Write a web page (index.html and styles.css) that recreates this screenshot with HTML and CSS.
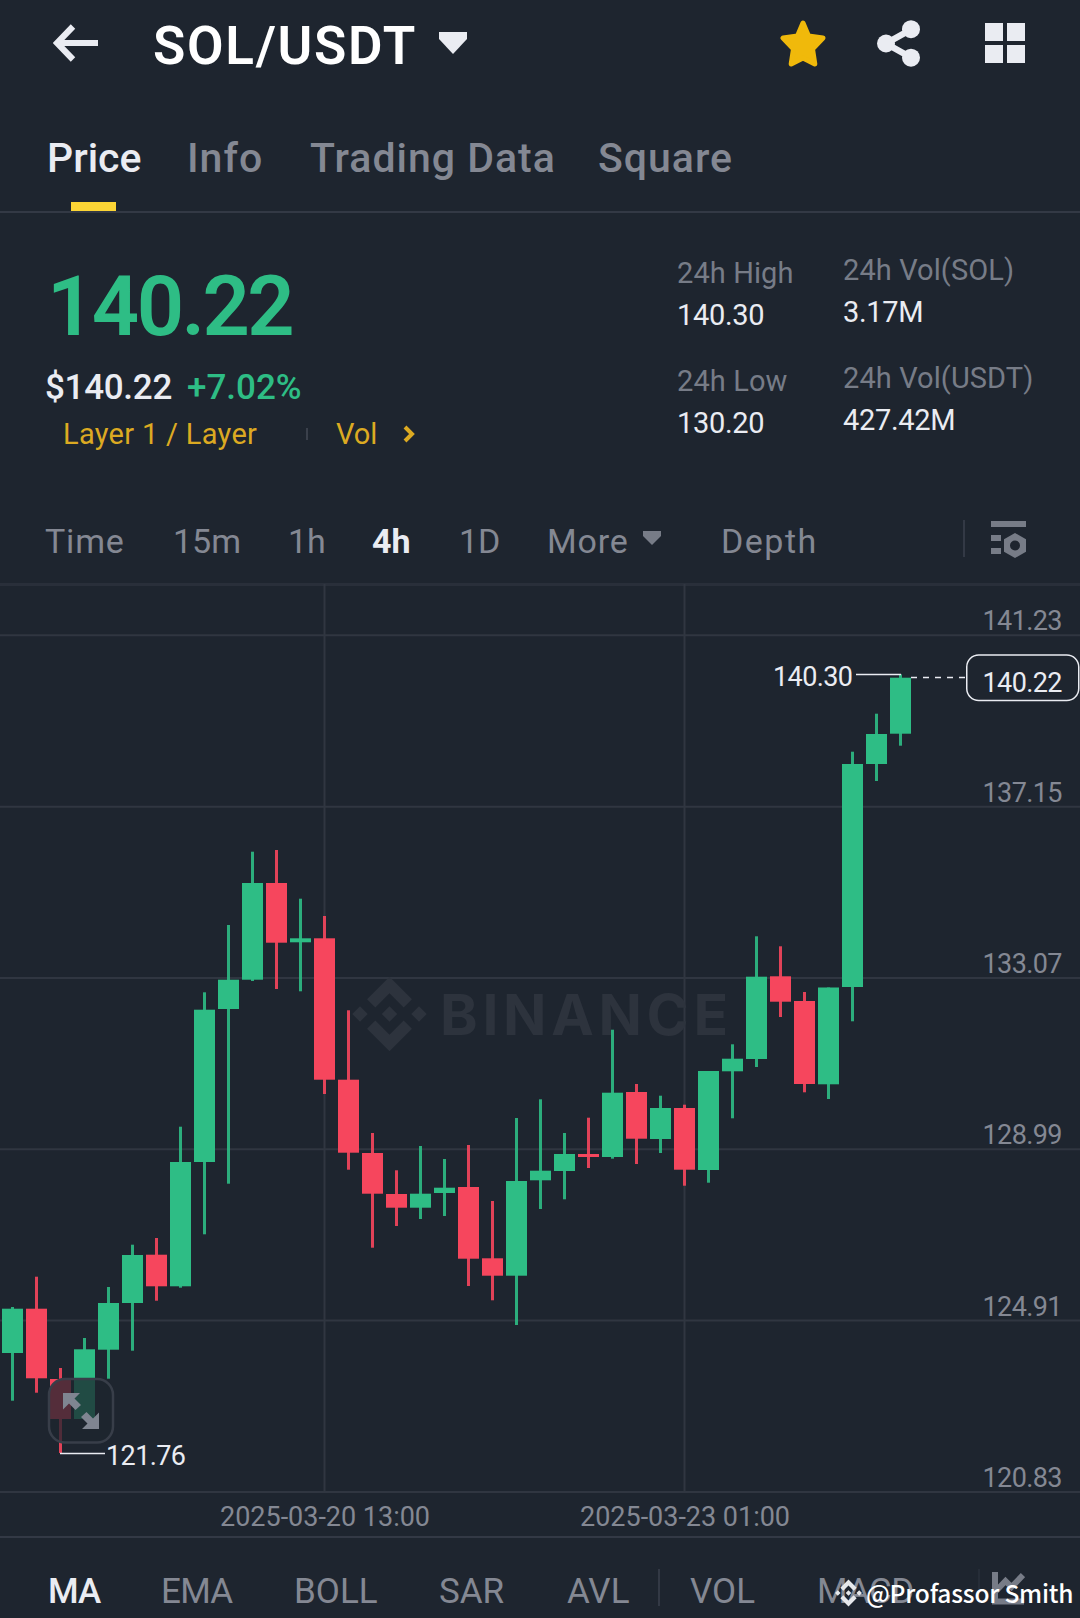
FILE: index.html
```
<!DOCTYPE html>
<html lang="en">
<head>
    <meta charset="UTF-8">
    <meta name="viewport" content="width=device-width, initial-scale=1.0">
    <title>SOL/USDT</title>
    <link rel="stylesheet" href="styles.css">
</head>
<body>
    <header class="topbar">
        <svg class="back" width="46" height="38" viewBox="0 0 46 38">
            <path d="M45 19H4M20 2.5L4 19l16 16.5" fill="none" stroke="#eaecf2" stroke-width="6.2"/>
        </svg>
        <h1>SOL/USDT</h1>
        <svg class="pair-caret" width="28" height="22" viewBox="0 0 28 22">
            <path d="M0 0h28v7L14 22 0 7z" fill="#eaecf2"/>
        </svg>
        <svg class="star" width="46" height="47" viewBox="0 0 46 47">
            <path d="M23 3l5.500 13L43 18l-10.500 11 2.300 15L23 38l-11.800 6 2.300-15L3 18l14.500-2z" fill="#f0b90b" stroke="#f0b90b" stroke-width="5" stroke-linejoin="round"/>
        </svg>
        <svg class="share" width="43" height="47" viewBox="0 0 43 47">
            <path d="M34 9.500L9 23.500l25 14" fill="none" stroke="#eaecf2" stroke-width="6.500"/>
            <circle cx="34" cy="9.200" r="9" fill="#eaecf2"/>
            <circle cx="9" cy="23.500" r="9" fill="#eaecf2"/>
            <circle cx="34" cy="37.700" r="9" fill="#eaecf2"/>
        </svg>
        <svg class="tiles" width="40" height="40" viewBox="0 0 40 40">
            <path d="M0 0h18v18H0zM22 0h18v18H22zM0 22h18v18H0zM22 22h18v18H22z" fill="#eaecf2"/>
        </svg>
    </header>

    <nav class="tabs">
        <a class="tab active">Price</a>
        <a class="tab">Info</a>
        <a class="tab">Trading Data</a>
        <a class="tab">Square</a>
    </nav>

    <section class="ticker">
        <div class="price-box">
            <div class="last-price">140.22</div>
            <div class="fiat"><span class="usd">$140.22</span><span class="change">+7.02%</span></div>
            <div class="tags">
                <span class="layer">Layer 1 / Layer</span>
                <span class="tag-line"></span>
                <span class="vol">Vol</span>
                <svg width="12" height="18" viewBox="0 0 12 18">
                    <path d="M2 2l7 7-7 7" fill="none" stroke="#dcaa22" stroke-width="4"/>
                </svg>
            </div>
        </div>
        <div class="stats high-low">
            <div class="label">24h High</div>
            <div class="value">140.30</div>
            <div class="label">24h Low</div>
            <div class="value">130.20</div>
        </div>
        <div class="stats volumes">
            <div class="label">24h Vol(SOL)</div>
            <div class="value">3.17M</div>
            <div class="label">24h Vol(USDT)</div>
            <div class="value">427.42M</div>
        </div>
    </section>

    <nav class="intervals">
        <span class="time">Time</span>
        <span class="m15">15m</span>
        <span class="h1">1h</span>
        <span class="h4 active">4h</span>
        <span class="d1">1D</span>
        <span class="more">More</span>
        <svg class="more-caret" width="18" height="14" viewBox="0 0 18 14">
            <path d="M0 0h18v5L9 14 0 5z" fill="#777c87"/>
        </svg>
        <span class="depth">Depth</span>
        <i class="divider"></i>
        <svg class="settings" width="35" height="37" viewBox="0 0 35 37">
            <path d="M0 0h35v6H0zM0 14h10v6H0zM0 27h10v6H0z" fill="#777c87"/>
            <path d="M24 12l11 6.300v12.500L24 37l-11-6.200V18.300zM24 19.500a5 5 0 1 0 0 10 5 5 0 0 0 0-10z" fill="#777c87" fill-rule="evenodd"/>
        </svg>
    </nav>

    <svg id="chart" width="1080" height="953" viewBox="0 583 1080 953">
        <g id="grid"></g>
        <g class="brand">
            <g id="brand-logo" transform="translate(389.500 1014) scale(.59)">
                <path d="M0-63l38 38-14 14L0-35l-24 24-14-14zM0 63l38-38-14-14L0 35l-24-24-14 14zM0-13L13 0 0 13-13 0zM-50-13L-37 0l-13 13L-63 0zM50-13L63 0 50 13 37 0z"/>
            </g>
            <text x="440" y="1034.500" textLength="288">BINANCE</text>
        </g>
        <g id="candles"></g>
        <g id="marks">
            <path class="mark-line" d="M856 674.500h45M60 1453.500h45"/>
            <path class="mark-line" d="M911 677.500h55" stroke-dasharray="6 6"/>
            <text class="mark" x="773" y="685.500" textLength="80">140.30</text>
            <text class="mark" x="106" y="1464.500" textLength="80">121.76</text>
            <rect class="price-tag" x="966.750" y="655" width="112" height="45.500" rx="12"/>
            <text class="mark" x="982.500" y="691.500" textLength="80">140.22</text>
        </g>
        <g id="expand">
            <rect x="49" y="1379" width="64" height="63.500" rx="16"/>
            <path d="M63 1393h17l-5.500 5.500 6.500 6.500-5.500 5-6.500-6.500-6 6zM99 1429H82l5.500-5.500-6.500-6.500 5.500-5 6.500 6.500 6-6z"/>
        </g>
    </svg>

    <footer class="indicators">
        <span class="ma active">MA</span>
        <span class="ema">EMA</span>
        <span class="boll">BOLL</span>
        <span class="sar">SAR</span>
        <span class="avl">AVL</span>
        <i class="divider"></i>
        <span class="volume">VOL</span>
        <span class="macd">MACD</span>
        <i class="divider faint"></i>
        <svg class="chart-icon" width="33" height="33" viewBox="0 0 33 33">
            <path d="M3 0v29.500h29M3 20L13.500 9l6 6L31 3" fill="none" stroke="#777c87" stroke-width="6"/>
        </svg>
        <div class="author">
            <svg width="27" height="28" viewBox="-63 -65 126 130">
                <path d="M0-63l38 38-14 14L0-35l-24 24-14-14zM0 63l38-38-14-14L0 35l-24-24-14 14zM0-13L13 0 0 13-13 0zM-50-13L-37 0l-13 13L-63 0zM50-13L63 0 50 13 37 0z" fill="#e6e8eb"/>
            </svg>
            <span>@Profassor Smith</span>
        </div>
    </footer>

    <script>
        // color, high, body top, body bottom, low
        const candles = [
            ['g', 1307, 1308.7, 1353, 1400.7],
            ['r', 1276.7, 1308.7, 1378.3, 1392.7],
            ['r', 1368, 1379, 1419, 1453],
            ['g', 1338, 1349.3, 1419, 1419],
            ['g', 1287, 1303, 1349.7, 1378.7],
            ['g', 1244.7, 1255, 1303, 1350.7],
            ['r', 1238, 1254.7, 1286.3, 1300.7],
            ['g', 1126.7, 1162, 1286.3, 1287.7],
            ['g', 992.3, 1009.7, 1162, 1234.3],
            ['g', 925, 979.7, 1009, 1183.7],
            ['g', 851.7, 883, 979.7, 981],
            ['r', 850, 883, 942.7, 989],
            ['g', 898.7, 938.3, 942.3, 991.3],
            ['r', 916, 938.3, 1079.7, 1094],
            ['r', 1010.3, 1079.7, 1152.7, 1169.7],
            ['r', 1133, 1153, 1193.7, 1247.7],
            ['r', 1170.3, 1194, 1207.7, 1226],
            ['g', 1146, 1193.7, 1207.7, 1219],
            ['g', 1159, 1187.7, 1193, 1216],
            ['r', 1145, 1187, 1258.7, 1286],
            ['r', 1201, 1258.3, 1275.7, 1300.3],
            ['g', 1118, 1181, 1275.7, 1325],
            ['g', 1099.3, 1170.7, 1180.3, 1209],
            ['g', 1133, 1154, 1171, 1199.3],
            ['r', 1117.7, 1154, 1157, 1168],
            ['g', 1029.7, 1092.7, 1157, 1158.7],
            ['r', 1084, 1092, 1138.7, 1164],
            ['g', 1095.7, 1108, 1139, 1153],
            ['r', 1104.7, 1108, 1169.7, 1185.7],
            ['g', 1071, 1071, 1170, 1182.7],
            ['g', 1044.3, 1058.7, 1071.3, 1118.3],
            ['g', 936.3, 976.7, 1059, 1067],
            ['r', 946.3, 976.3, 1001.7, 1017],
            ['r', 992, 1001, 1084, 1092.3],
            ['g', 987.5, 987.5, 1084.3, 1099],
            ['g', 751.7, 764, 987, 1021.3],
            ['g', 713.7, 734, 764, 781],
            ['g', 674.3, 677.7, 733.7, 745.7]
        ];

        // grid and axis labels
        let grid = '<path class="top-line" d="M0 584.500H1080"/>';
        ['141.23', '137.15', '133.07', '128.99', '124.91', '120.83'].forEach((price, i) => {
            const y = 635.3 + i * 171.33;
            grid += `<path d="M0 ${y}H1080"/><text x="982.5" y="${y - 5}" textLength="80">${price}</text>`;
        });
        grid += '<path d="M324.500 584V1492M684.500 584V1492"/>';
        grid += '<text x="220" y="1525.500" textLength="210">2025-03-20 13:00</text>';
        grid += '<text x="580" y="1525.500" textLength="210">2025-03-23 01:00</text>';
        document.getElementById('grid').innerHTML = grid;

        // candles, 24px apart
        document.getElementById('candles').innerHTML = candles.map(([color, high, top, bottom, low], i) => {
            const x = 2 + i * 24;
            return `<g class="${color}"><rect class="wick" x="${x + 9}" y="${high}" width="3" height="${low - high}"/>` +
                `<rect x="${x}" y="${top}" width="21" height="${bottom - top}"/></g>`;
        }).join('');
    </script>
</body>
</html>
```
FILE: styles.css
```
/* General */
* {
    box-sizing: border-box;
}

body {
    margin: 0;
    width: 1080px;
    height: 1618px;
    overflow: hidden;
    background-color: #1e252f;
    color: #eaecf2;
    font-family: Roboto, "Liberation Sans", sans-serif;
}

svg {
    display: block;
    flex: none;
}

span, a {
    flex: none;
    white-space: nowrap;
}

/* Top bar */
.topbar {
    display: flex;
    align-items: center;
    height: 86px;
    padding-left: 53px;
}

h1 {
    width: 262px;
    margin: 6px 24px 0 54px;
    font-size: 53px;
    font-weight: 600;
    line-height: 60px;
    color: #fff;
    letter-spacing: 1.7px;
}

.star {
    margin-left: 313px;
}

.share {
    margin-left: 51px;
}

.tiles {
    margin-left: 65px;
}

/* Tabs */
.tabs {
    display: grid;
    grid-template-columns: 140px 123px 288px 200px;
    height: 127px;
    padding: 47px 0 0 47px;
    border-bottom: 2px solid #333945;
}

.tab {
    height: 78px;
    font-size: 41px;
    font-weight: 500;
    line-height: 50px;
    color: #848893;
    letter-spacing: 1px;
}

.tab.active {
    color: #eaecf2;
    letter-spacing: 0;
}

.tab.active::after {
    content: "";
    display: block;
    width: 45px;
    height: 9px;
    margin: 19px 0 0 24px;
    background-color: #fcd535;
}

/* Ticker */
.ticker {
    display: flex;
    height: 282px;
}

.price-box {
    width: 677px;
    padding: 45px 0 0 45px;
}

.last-price {
    height: 97px;
    padding-left: 2px;
    font-size: 83px;
    font-weight: 600;
    line-height: 98px;
    color: #2ebd85;
    letter-spacing: -2.6px;
}

.fiat {
    display: flex;
    height: 59px;
    font-size: 35px;
    font-weight: 500;
    line-height: 66px;
}

.usd {
    width: 142px;
    letter-spacing: -0.3px;
}

.change {
    color: #2ebd85;
}

.tags {
    display: flex;
    align-items: center;
    height: 40px;
    padding-left: 18px;
    font-size: 29px;
    color: #dcaa22;
}

.layer {
    width: 243px;
    letter-spacing: 0.3px;
}

.tag-line {
    width: 2px;
    height: 12px;
    margin-right: 28px;
    background-color: #3a404b;
}

.vol {
    width: 67px;
}

.stats {
    width: 166px;
    font-size: 29px;
}

.high-low {
    padding-top: 39px;
}

.volumes {
    padding-top: 36px;
    width: 230px;
}

.label {
    height: 42px;
    line-height: 42px;
    color: #777c87;
    letter-spacing: 0.1px;
}

.value {
    height: 66px;
    line-height: 42px;
    letter-spacing: -0.3px;
}

/* Intervals */
.intervals {
    display: flex;
    height: 88px;
    padding-left: 45px;
    font-size: 34px;
    line-height: 92px;
    color: #848893;
}

.intervals .active {
    color: #eaecf2;
    font-weight: 700;
}

.time { width: 128px; }
.m15 { width: 115px; }
.h1 { width: 84px; }
.h4 { width: 87px; }
.d1 { width: 88px; }
.more { width: 96px; }
.depth { width: 242px; }

.time, .more {
    letter-spacing: 0.8px;
}

.depth {
    letter-spacing: 1.5px;
}

.more-caret {
    margin: 36px 60px 0 0;
}

.divider {
    flex: none;
    width: 2px;
    height: 37px;
    background-color: #333945;
}

.intervals .divider {
    margin: 25px 26px 0 0;
}

.settings {
    margin-top: 26px;
}

/* Chart */
#chart text {
    font-size: 27px;
    fill: #848893;
}

#grid path {
    stroke: #303641;
    stroke-width: 2;
    fill: none;
}

#grid .top-line {
    stroke: #292f3a;
    stroke-width: 3;
}

.brand {
    fill: #2d333d;
}

#chart .brand text {
    font-family: Inter, sans-serif;
    font-size: 57px;
    font-weight: 700;
    fill: #2d333d;
}

.g {
    fill: #2ebd85;
}

.r {
    fill: #f6465d;
}

.wick {
    opacity: 0.9;
}

#chart .mark {
    fill: #eaecf2;
}

.mark-line {
    stroke: #eaecf2;
    stroke-width: 1.5;
    fill: none;
}

.price-tag {
    fill: #1e252f;
    stroke: #eaecf2;
    stroke-width: 1.5;
}

#expand rect {
    fill: #1e252f;
    fill-opacity: 0.75;
    stroke: #383e49;
    stroke-width: 2.5;
}

#expand path {
    fill: #7f8591;
}

/* Indicators */
.indicators {
    position: relative;
    display: flex;
    height: 82px;
    padding-left: 48px;
    border-top: 2px solid #333945;
    font-size: 35px;
    line-height: 108px;
    color: #848893;
}

.indicators .active {
    color: #eaecf2;
    font-weight: 500;
    letter-spacing: -1px;
}

.ma { width: 113px; }
.ema { width: 133px; }
.boll { width: 145px; }
.sar { width: 128px; }
.avl { width: 91px; }
.volume { width: 127px; }
.macd { width: 161px; }

.macd, .ema {
    letter-spacing: -0.7px;
}

.indicators .divider {
    margin: 31px 30px 0 0;
}

.indicators .faint {
    height: 22px;
    margin-right: 12px;
    opacity: 0.4;
}

.chart-icon {
    margin-top: 34px;
}

/* Author name over the last indicators */
.author {
    position: absolute;
    left: 835px;
    top: 37px;
    display: flex;
    align-items: center;
    height: 36px;
    color: #fff;
    font-family: "Noto Sans CJK SC", sans-serif;
    font-size: 24.5px;
    font-weight: 500;
    line-height: 36px;
}

.author span {
    margin-left: 4px;
    letter-spacing: -0.2px;
}
```
